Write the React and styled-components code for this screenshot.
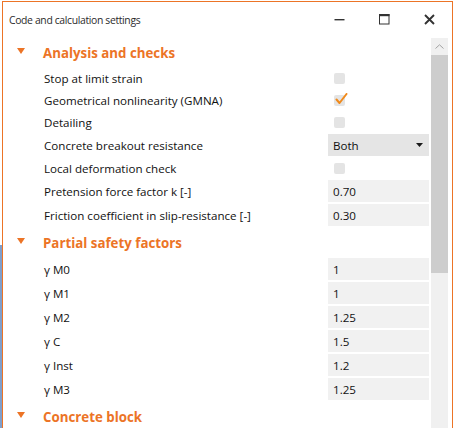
import React from "react";
import styled, { createGlobalStyle } from "styled-components";

const GlobalStyle = createGlobalStyle`
  html, body {
    margin: 0;
    padding: 0;
    overflow: hidden;
  }
  body {
    background: #fff linear-gradient(#7f9fcc, #7f9fcc) no-repeat 0 245px / 2px 100%;
    font-family: "Open Sans", "Noto Sans", sans-serif;
  }
`;

const ORANGE = "#ec7426";

const Window = styled.div`
  margin: 1px 0 0 2px;
  width: 449px;
  height: 440px;
  border: 1px solid ${ORANGE};
  background: #fff;
  display: flex;
  flex-direction: column;
`;

const TitleBar = styled.div`
  height: 35px;
  display: flex;
  align-items: center;
  padding-left: 6px;
  flex-shrink: 0;
`;

const Title = styled.div`
  flex: 1;
  font-size: 10.4px;
  letter-spacing: -0.35px;
  color: #2b2b2b;
`;

const Controls = styled.div`
  display: flex;
  align-items: center;
`;

const ControlBtn = styled.div`
  width: 45px;
  height: 30px;
  display: flex;
  align-items: center;
  justify-content: center;
`;

const Body = styled.div`
  display: flex;
  flex: 1;
  padding-right: 4px;
`;

const Content = styled.div`
  flex: 1;
  padding-right: 2px;
`;

const Scrollbar = styled.div`
  width: 17px;
  margin-top: 1px;
  background: #f0f0f0;
  display: flex;
  flex-direction: column;
`;

const ScrollUp = styled.div`
  height: 17px;
  display: flex;
  align-items: center;
  justify-content: center;
`;

const Thumb = styled.div`
  height: 218px;
  background: #cdcdcd;
`;

const Header = styled.div`
  height: 30px;
  display: flex;
  align-items: center;
  padding-top: 2px;
  box-sizing: border-box;
`;

const Caret = styled.div`
  width: 0;
  height: 0;
  margin: 0 18px 0 14px;
  border-left: 4.5px solid transparent;
  border-right: 4.5px solid transparent;
  border-top: 6px solid ${ORANGE};
  position: relative;
  top: -2px;
`;

const HeaderText = styled.div`
  font-weight: 700;
  font-size: 13.3px;
  color: ${ORANGE};
`;

const Row = styled.div`
  height: ${({ $tall }) => ($tall ? 24 : 22)}px;
  display: grid;
  grid-template-columns: 284px 101px;
  padding-left: 41px;
  align-items: center;
`;

const Label = styled.div`
  font-size: 11.6px;
  color: #111;
  white-space: nowrap;
`;

const Box = styled.div`
  height: 22px;
  box-sizing: border-box;
  padding: 0 6px 0 5px;
  display: flex;
  align-items: center;
  justify-content: space-between;
  font-size: 11.6px;
  color: #111;
  background: ${({ $select }) => ($select ? "#e5e5e5" : "#f1f1f1")};
`;

const Check = styled.div`
  width: 11px;
  height: 11px;
  margin-left: 6px;
  border-radius: 2px;
  background: #e4e4e4;
  position: relative;
`;

const Tick = styled.svg`
  position: absolute;
  left: 1px;
  top: -2px;
`;

const Minimize = () => (
  <svg width="11" height="11" viewBox="0 0 11 11">
    <rect x="0.5" y="5" width="10" height="1.4" fill="#333" />
  </svg>
);

const Maximize = () => (
  <svg width="11" height="11" viewBox="0 0 11 11">
    <rect x="0.5" y="0.5" width="9.5" height="9.5" fill="none" stroke="#333" />
    <rect x="0" y="0" width="10.5" height="2.2" fill="#333" />
  </svg>
);

const Close = () => (
  <svg width="11" height="11" viewBox="0 0 11 11">
    <path d="M1 1 L10 10 M10 1 L1 10" stroke="#333" strokeWidth="1.9" />
  </svg>
);

const CheckBox = ({ checked }) => (
  <Check>
    {checked && (
      <Tick width="13" height="12" viewBox="0 0 13 12">
        <path
          d="M1.5 6.5 L4.5 10 L11.5 1"
          fill="none"
          stroke="#f08a1c"
          strokeWidth="2"
          strokeLinecap="round"
          strokeLinejoin="round"
        />
      </Tick>
    )}
  </Check>
);

const Section = ({ title }) => (
  <Header>
    <Caret />
    <HeaderText>{title}</HeaderText>
  </Header>
);

const analysis = [
  { label: "Stop at limit strain", type: "check" },
  { label: "Geometrical nonlinearity (GMNA)", type: "check", checked: true },
  { label: "Detailing", type: "check" },
  { label: "Concrete breakout resistance", type: "select", value: "Both" },
  { label: "Local deformation check", type: "check" },
  { label: "Pretension force factor k [-]", type: "input", value: "0.70" },
  { label: "Friction coefficient in slip-resistance [-]", type: "input", value: "0.30" },
];

const factors = [
  { label: "γ M0", value: "1" },
  { label: "γ M1", value: "1" },
  { label: "γ M2", value: "1.25" },
  { label: "γ C", value: "1.5" },
  { label: "γ Inst", value: "1.2" },
  { label: "γ M3", value: "1.25" },
];

const SettingRow = ({ label, type = "input", value, checked }) => (
  <Row $tall={type !== "check"}>
    <Label>{label}</Label>
    {type === "check" && <CheckBox checked={checked} />}
    {type === "select" && (
      <Box $select>
        {value}
        <svg width="7" height="4" viewBox="0 0 7 4">
          <path d="M0 0 L7 0 L3.5 4 Z" fill="#1b1b1b" />
        </svg>
      </Box>
    )}
    {type === "input" && <Box>{value}</Box>}
  </Row>
);

export default function App() {
  return (
    <>
      <GlobalStyle />
      <Window>
        <TitleBar>
          <Title>Code and calculation settings</Title>
          <Controls>
            <ControlBtn>
              <Minimize />
            </ControlBtn>
            <ControlBtn>
              <Maximize />
            </ControlBtn>
            <ControlBtn>
              <Close />
            </ControlBtn>
          </Controls>
        </TitleBar>
        <Body>
          <Content>
            <Section title="Analysis and checks" />
            {analysis.map((r) => (
              <SettingRow key={r.label} {...r} />
            ))}
            <Section title="Partial safety factors" />
            {factors.map((r) => (
              <SettingRow key={r.label} {...r} />
            ))}
            <Section title="Concrete block" />
          </Content>
          <Scrollbar>
            <ScrollUp>
              <svg width="9" height="5" viewBox="0 0 9 5">
                <path d="M0.5 4.5 L4.5 0.8 L8.5 4.5" fill="none" stroke="#a3a3a3" strokeWidth="1" />
              </svg>
            </ScrollUp>
            <Thumb />
          </Scrollbar>
        </Body>
      </Window>
    </>
  );
}
